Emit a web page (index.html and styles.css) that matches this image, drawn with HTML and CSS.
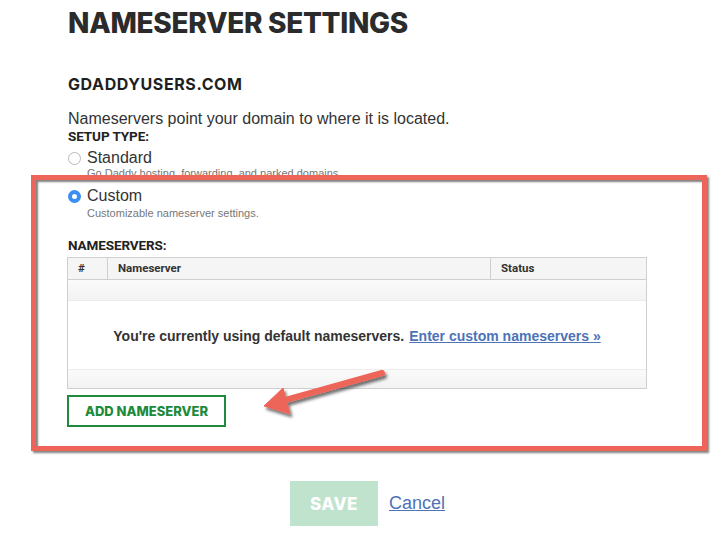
FILE: index.html
```html
<!DOCTYPE html>
<html lang="en">
<head>
    <meta charset="UTF-8">
    <meta name="viewport" content="width=device-width, initial-scale=1.0">
    <title>Nameserver Settings</title>
    <link rel="stylesheet" href="styles.css">
</head>
<body>
    <div class="page">
        <h1>NAMESERVER SETTINGS</h1>
        <h2>GDADDYUSERS.COM</h2>
        <p class="intro">Nameservers point your domain to where it is located.</p>
        <div class="label">SETUP TYPE:</div>

        <div class="option">
            <span class="radio"></span>
            <span class="option-name">Standard</span>
        </div>
        <div class="option-note std">Go Daddy hosting, forwarding, and parked domains.</div>

        <div class="option custom">
            <span class="radio checked"></span>
            <span class="option-name">Custom</span>
        </div>
        <div class="option-note">Customizable nameserver settings.</div>

        <div class="label ns-label">NAMESERVERS:</div>
        <div class="ns-table">
            <div class="ns-head">
                <div class="col-num">#</div>
                <div class="col-name">Nameserver</div>
                <div class="col-status">Status</div>
            </div>
            <div class="ns-strip"></div>
            <div class="ns-body">
                <span class="ns-msg">You're currently using default nameservers.</span>
                <a href="#" class="ns-link">Enter custom nameservers &raquo;</a>
            </div>
            <div class="ns-strip bottom"></div>
        </div>
        <button class="add-btn" type="button">ADD NAMESERVER</button>

        <div class="actions">
            <button class="save-btn" type="button">SAVE</button>
            <a href="#" class="cancel">Cancel</a>
        </div>
    </div>

    <!-- annotation overlay -->
    <div class="highlight"></div>
    <svg class="arrow" width="722" height="553" viewBox="0 0 722 553">
        <defs>
            <filter id="shade" x="-20%" y="-20%" width="140%" height="160%">
                <feDropShadow dx="2" dy="3" stdDeviation="1.5" flood-color="#000" flood-opacity="0.55"/>
            </filter>
        </defs>
        <g filter="url(#shade)" fill="#ec6558" stroke="#ec6558">
            <line x1="382" y1="373" x2="282" y2="401" stroke-width="6" stroke-linecap="round"/>
            <polygon points="264,406 283,388 290,414" stroke-width="1" stroke-linejoin="round"/>
        </g>
    </svg>
</body>
</html>
```

FILE: styles.css
```css
body {
    margin: 0;
    background: #fff;
    font-family: "Liberation Sans", Arial, sans-serif;
    color: #333;
}
.page {
    padding: 0 0 0 68px;
    width: 654px;
}
h1 {
    font-family: Inter, "Open Sans", sans-serif;
    font-weight: 800;
    font-size: 28px;
    letter-spacing: -0.3px;
    line-height: 34px;
    color: #2b2b2b;
    margin: 6px 0 0;
}
h2 {
    font-family: Inter, "Open Sans", sans-serif;
    font-weight: 700;
    font-size: 16px;
    letter-spacing: 0.6px;
    line-height: 20px;
    color: #1f1f1f;
    margin: 34px 0 0;
}
.intro {
    font-size: 16px;
    line-height: 18px;
    margin: 16px 0 0;
    color: #333;
}
.label {
    font-family: Roboto, sans-serif;
    font-weight: 700;
    font-size: 13.5px;
    line-height: 16px;
    letter-spacing: -0.1px;
    color: #222;
}
.option {
    display: flex;
    align-items: center;
    gap: 6px;
    margin-top: 4px;
    height: 20px;
}
.option.custom {
    margin-top: 6px;
}
.radio {
    width: 11px;
    height: 11px;
    border: 1px solid #b8b8b8;
    border-radius: 50%;
    background: #fff;
    box-sizing: content-box;
}
.radio.checked {
    width: 5px;
    height: 5px;
    border: 4px solid #3b8ff0;
}
.option-name {
    font-size: 16px;
    color: #333;
}
.option-note {
    font-size: 11px;
    line-height: 14px;
    color: #777;
    margin-left: 19px;
}
.option-note.std {
    margin-top: -2px;
}
.ns-label {
    margin-top: 17px;
}
.ns-table {
    margin: 4px 0 0 -1px;
    width: 578px;
    border: 1px solid #cfcfcf;
    font-family: Roboto, sans-serif;
}
.ns-head {
    display: flex;
    background: #f5f5f5;
    border-bottom: 1px solid #cfcfcf;
    height: 21px;
    font-size: 11.5px;
    font-weight: 700;
    color: #333;
    line-height: 21px;
}
.ns-head > div {
    padding-left: 10px;
}
.col-num {
    width: 29px;
    border-right: 1px solid #cfcfcf;
}
.col-name {
    width: 372px;
    border-right: 1px solid #cfcfcf;
}
.ns-strip {
    height: 20px;
    background: linear-gradient(#fafafa, #f3f3f3);
    border-bottom: 1px solid #ececec;
}
.ns-strip.bottom {
    height: 18px;
    border-bottom: none;
    border-top: 1px solid #ececec;
}
.ns-body {
    height: 68px;
    display: flex;
    align-items: center;
    justify-content: center;
    gap: 5px;
    font-family: "Liberation Sans", Arial, sans-serif;
    font-size: 14px;
    padding-top: 2px;
    box-sizing: border-box;
}
.ns-msg {
    font-weight: 700;
    color: #333;
}
.ns-link {
    font-weight: 700;
    color: #4d72b8;
}
.add-btn {
    margin-top: 6px;
    width: 159px;
    height: 32px;
    background: #fff;
    border: 2px solid #1e8a3b;
    color: #1e8a3b;
    font-family: Inter, "Open Sans", sans-serif;
    font-weight: 800;
    font-size: 13px;
    margin-left: -1px;
}
.actions {
    display: flex;
    align-items: center;
    gap: 11px;
    margin: 54px 0 0 222px;
}
.save-btn {
    width: 88px;
    height: 45px;
    border: none;
    background: #bfe3cd;
    color: #fff;
    font-family: Inter, "Open Sans", sans-serif;
    font-weight: 800;
    font-size: 17px;
    letter-spacing: 0.5px;
}
.cancel {
    font-size: 18px;
    color: #4d72b8;
}
.highlight {
    position: absolute;
    left: 31px;
    top: 175px;
    width: 676px;
    height: 276px;
    box-sizing: border-box;
    border: 5px solid #ec6558;
    box-shadow: 2px 2px 2px rgba(0, 0, 0, 0.5), inset 2px 2px 2px rgba(0, 0, 0, 0.5);
    pointer-events: none;
}
.arrow {
    position: absolute;
    left: 0;
    top: 0;
    pointer-events: none;
}
```
